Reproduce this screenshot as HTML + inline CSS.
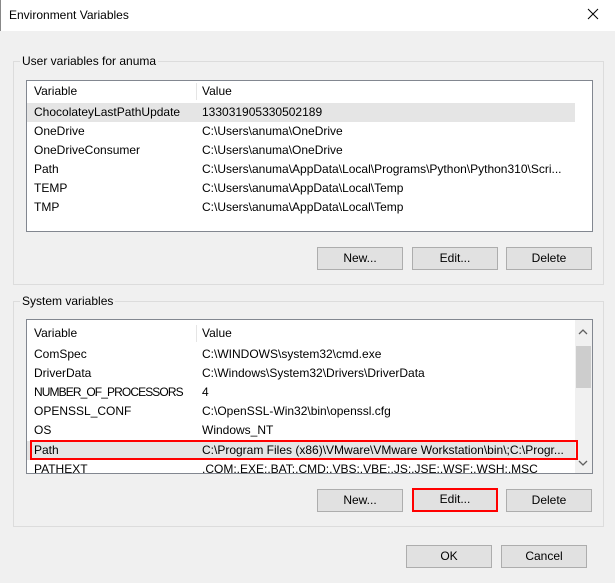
<!DOCTYPE html>
<html><head><style>
*{margin:0;padding:0;box-sizing:border-box}
body{width:615px;height:583px;background:#f0f0f0;font-family:"Liberation Sans",sans-serif;font-size:12px;color:#000;position:relative;overflow:hidden}
.abs{position:absolute}
.title{left:0;top:0;width:615px;height:31px;background:#fff;border-left:1px solid #888}
.grp{border:1px solid #dcdcdc}
.leg{background:#f0f0f0;padding:0 2px;line-height:14px}
.list{background:#fff;border:1px solid #828790;overflow:hidden}
.row{position:absolute;left:0;height:19px;line-height:19px;white-space:nowrap}
.row span{position:absolute}
.btn{background:#e1e1e1;border:1px solid #adadad;text-align:center;line-height:21px}
</style></head><body>
<div class="abs title"><div class="abs" style="left:8px;top:8px">Environment Variables</div>
<svg class="abs" style="left:586px;top:8px" width="12" height="12"><path d="M1 1L11 11M11 1L1 11" stroke="#000" stroke-width="1"/></svg></div>

<div class="abs grp" style="left:13px;top:61px;width:591px;height:224px"></div>
<div class="abs leg" style="left:20px;top:54px">User variables for anuma</div>
<div class="abs list" style="left:26px;top:80px;width:567px;height:152px">
 <div class="row" style="top:1px;width:548px"><span style="left:7px">Variable</span><span style="left:175px">Value</span></div>
 <div class="abs" style="left:169px;top:2px;width:1px;height:17px;background:#e5e5e5"></div>
 <div class="row" style="top:22px;width:548px;background:#e5e5e5"><span style="left:7px">ChocolateyLastPathUpdate</span><span style="left:175px">133031905330502189</span></div>
 <div class="row" style="top:41px"><span style="left:7px">OneDrive</span><span style="left:175px">C:\Users\anuma\OneDrive</span></div>
 <div class="row" style="top:60px"><span style="left:7px">OneDriveConsumer</span><span style="left:175px">C:\Users\anuma\OneDrive</span></div>
 <div class="row" style="top:79px"><span style="left:7px">Path</span><span style="left:175px">C:\Users\anuma\AppData\Local\Programs\Python\Python310\Scri...</span></div>
 <div class="row" style="top:98px"><span style="left:7px">TEMP</span><span style="left:175px">C:\Users\anuma\AppData\Local\Temp</span></div>
 <div class="row" style="top:117px"><span style="left:7px">TMP</span><span style="left:175px">C:\Users\anuma\AppData\Local\Temp</span></div>
</div>
<div class="abs btn" style="left:317px;top:247px;width:86px;height:23px">New...</div>
<div class="abs btn" style="left:412px;top:247px;width:86px;height:23px">Edit...</div>
<div class="abs btn" style="left:506px;top:247px;width:86px;height:23px">Delete</div>

<div class="abs grp" style="left:13px;top:301px;width:591px;height:226px"></div>
<div class="abs leg" style="left:20px;top:294px">System variables</div>
<div class="abs list" style="left:26px;top:319px;width:567px;height:155px">
 <div class="row" style="top:4px;width:548px"><span style="left:7px">Variable</span><span style="left:175px">Value</span></div>
 <div class="abs" style="left:169px;top:5px;width:1px;height:17px;background:#e5e5e5"></div>
 <div class="row" style="top:25px"><span style="left:7px">ComSpec</span><span style="left:175px">C:\WINDOWS\system32\cmd.exe</span></div>
 <div class="row" style="top:44px"><span style="left:7px">DriverData</span><span style="left:175px">C:\Windows\System32\Drivers\DriverData</span></div>
 <div class="row" style="top:63px"><span style="left:7px;letter-spacing:-0.9px">NUMBER_OF_PROCESSORS</span><span style="left:175px">4</span></div>
 <div class="row" style="top:82px"><span style="left:7px">OPENSSL_CONF</span><span style="left:175px">C:\OpenSSL-Win32\bin\openssl.cfg</span></div>
 <div class="row" style="top:101px"><span style="left:7px">OS</span><span style="left:175px">Windows_NT</span></div>
 <div class="row" style="top:121px;width:548px;background:#e5e5e5"><span style="left:7px">Path</span><span style="left:175px">C:\Program Files (x86)\VMware\VMware Workstation\bin\;C:\Progr...</span></div>
 <div class="row" style="top:140px"><span style="left:7px">PATHEXT</span><span style="left:175px">.COM;.EXE;.BAT;.CMD;.VBS;.VBE;.JS;.JSE;.WSF;.WSH;.MSC</span></div>
 <div class="abs" style="left:548px;top:0;width:17px;height:153px;background:#f0f0f0"></div>
 <div class="abs" style="left:549px;top:26px;width:15px;height:42px;background:#cdcdcd"></div>
 <svg class="abs" style="left:551px;top:9px" width="10" height="6"><path d="M1 5L5 1L9 5" stroke="#606060" fill="none" stroke-width="1.3"/></svg>
 <svg class="abs" style="left:551px;top:140px" width="10" height="6"><path d="M1 1L5 5L9 1" stroke="#606060" fill="none" stroke-width="1.3"/></svg>
</div>
<div class="abs" style="left:30px;top:440px;width:548px;height:20px;border:2.5px solid #f00"></div>
<div class="abs btn" style="left:317px;top:489px;width:86px;height:23px">New...</div>
<div class="abs btn" style="left:412px;top:488px;width:86px;height:24px;border:2.5px solid #f00;line-height:19px">Edit...</div>
<div class="abs btn" style="left:506px;top:489px;width:86px;height:23px">Delete</div>

<div class="abs btn" style="left:406px;top:545px;width:86px;height:23px">OK</div>
<div class="abs btn" style="left:501px;top:545px;width:86px;height:23px">Cancel</div>
</body></html>
